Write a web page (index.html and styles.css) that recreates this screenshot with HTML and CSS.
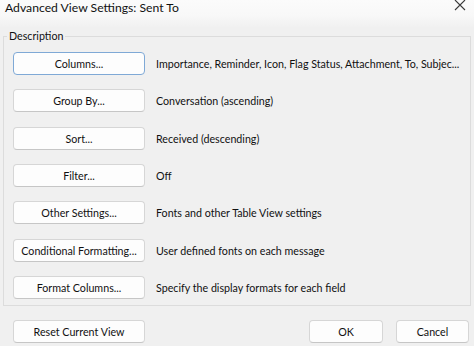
FILE: index.html
```html
<!DOCTYPE html>
<html>
<head>
<meta charset="utf-8">
<link rel="stylesheet" href="styles.css">
</head>
<body>
<div class="window">
  <div class="titlebar">
    <span class="title">Advanced View Settings: Sent To</span>
    <svg class="close" width="12" height="12" viewBox="0 0 12 12"><path d="M1 1 L11 11 M11 1 L1 11" stroke="#3a3a3a" stroke-width="1.1" fill="none"/></svg>
  </div>
  <div class="content">
    <fieldset class="group">
      <legend class="legend">Description</legend>
      <div class="rows">
        <div class="row"><button class="btn btn-default">Columns...</button><span class="desc">Importance, Reminder, Icon, Flag Status, Attachment, To, Subjec...</span></div>
        <div class="row"><button class="btn">Group By...</button><span class="desc">Conversation (ascending)</span></div>
        <div class="row"><button class="btn">Sort...</button><span class="desc">Received (descending)</span></div>
        <div class="row"><button class="btn">Filter...</button><span class="desc">Off</span></div>
        <div class="row"><button class="btn">Other Settings...</button><span class="desc">Fonts and other Table View settings</span></div>
        <div class="row"><button class="btn">Conditional Formatting...</button><span class="desc">User defined fonts on each message</span></div>
        <div class="row"><button class="btn">Format Columns...</button><span class="desc">Specify the display formats for each field</span></div>
      </div>
    </fieldset>
    <div class="footer">
      <button class="btn">Reset Current View</button>
      <div class="spacer"></div>
      <button class="btn btn-ok">OK</button>
      <button class="btn btn-cancel">Cancel</button>
    </div>
  </div>
</div>
</body>
</html>
```
FILE: styles.css
```css
html, body {
  margin: 0;
  padding: 0;
  background: #f0f0f0;
}
body {
  font-family: Lato, "Noto Sans", sans-serif;
  font-size: 10.7px;
  color: #111111;
  width: 474px;
  height: 346px;
  overflow: hidden;
}
.window {
  display: flex;
  flex-direction: column;
}
.titlebar {
  height: 28px;
  display: flex;
  align-items: flex-start;
  justify-content: space-between;
  background: linear-gradient(#fbfbfb 0%, #f8f8f8 55%, #f0f0f0 100%);
}
.title {
  font-size: 12.2px;
  line-height: 16px;
  margin-left: 5px;
  margin-top: 0;
  color: #111111;
}
.close {
  margin-right: 8px;
  margin-top: -1px;
}
.content {
  padding: 0 3px;
}
.group {
  margin: 0;
  padding: 0;
  border: 1px solid #dcdcdc;
  min-width: 0;
}
.legend {
  margin-left: 3px;
  padding: 0 2px;
  line-height: 16px;
  color: #111111;
}
.rows {
  display: flex;
  flex-direction: column;
  gap: 14.33px;
  padding: 8px 0 6px 9px;
}
.row {
  display: flex;
  align-items: center;
  gap: 11px;
  white-space: nowrap;
}
.btn {
  font-family: inherit;
  font-size: 10.7px;
  color: #111111;
  background: #fdfdfd;
  border: 1px solid #d6d6d6;
  border-bottom-color: #c6c6c6;
  border-radius: 4px;
  height: 23px;
  width: 132px;
  padding: 0;
  flex: none;
}
.btn-default {
  border-color: #7fa9d6;
}
.desc {
  color: #111111;
}
.footer {
  display: flex;
  align-items: center;
  gap: 13px;
  margin-top: 14px;
  padding: 0 2px 0 10px;
}
.spacer {
  flex: 1;
}
.btn-ok {
  width: 74px;
}
.btn-cancel {
  width: 73px;
}
```
